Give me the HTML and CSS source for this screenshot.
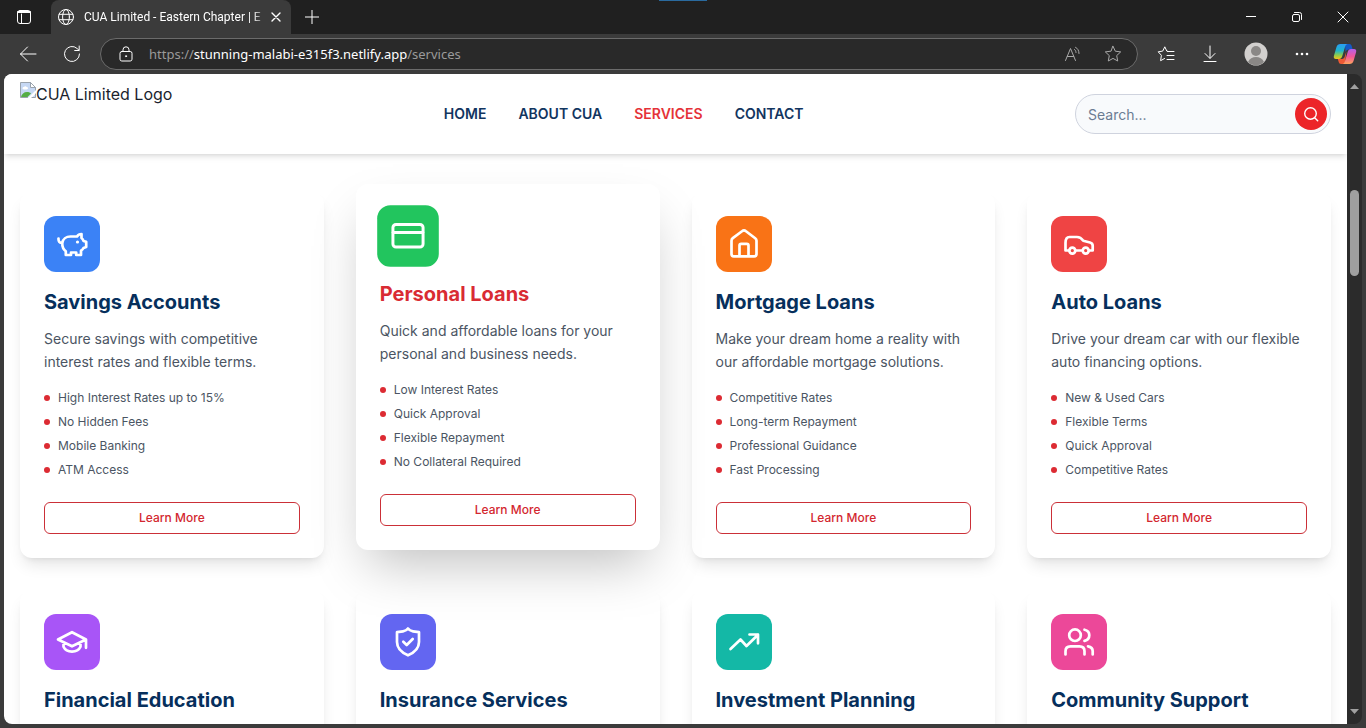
FILE: index.html
```
<!DOCTYPE html>
<html lang="en">
<head>
    <meta charset="UTF-8">
    <meta name="viewport" content="width=device-width, initial-scale=1.0">
    <title>CUA Limited - Eastern Chapter</title>
    <link rel="stylesheet" href="styles.css">
</head>
<body>
    <!-- tab strip -->
    <div class="tabstrip">
        <button class="tab-menu" aria-label="Tab actions">
            <svg width="16" height="16" viewBox="0 0 16 16"><rect x="1.5" y="1.5" width="13" height="13" rx="2.5"/><path d="M2 3.5h12M5.5 5v9" /><path d="M2 3h12" stroke-width="2"/></svg>
        </button>
        <div class="tab">
            <svg width="18" height="18" viewBox="0 0 18 18"><circle cx="9" cy="9" r="7.5"/><ellipse cx="9" cy="9" rx="3.4" ry="7.5"/><path d="M2.2 6.3h13.6M2.2 11.7h13.6"/></svg>
            <span class="tab-title">CUA Limited - Eastern Chapter | E</span>
            <button class="tab-close" aria-label="Close tab">
                <svg width="10" height="10" viewBox="0 0 10 10"><path d="M1 1l8 8M9 1l-8 8"/></svg>
            </button>
        </div>
        <button class="new-tab" aria-label="New tab">
            <svg width="14" height="14" viewBox="0 0 14 14"><path d="M7 0v14M0 7h14"/></svg>
        </button>
        <div class="drag-bar"></div>
        <div class="win-btns">
            <button aria-label="Minimize"><svg width="10" height="10" viewBox="0 0 10 10"><path d="M0 4.5h10"/></svg></button>
            <button aria-label="Restore"><svg width="12" height="12" viewBox="0 0 12 12"><rect x="1.5" y="3.5" width="7" height="7" rx="1.5"/><path d="M3.5 1.5h5a2 2 0 0 1 2 2v5"/></svg></button>
            <button aria-label="Close"><svg width="12" height="12" viewBox="0 0 12 12"><path d="M1 1l10 10M11 1L1 11"/></svg></button>
        </div>
    </div>

    <!-- toolbar -->
    <div class="toolbar">
        <button aria-label="Back"><svg width="18" height="16" viewBox="0 0 18 16"><path d="M17 8H1.5M8.5 1l-7 7 7 7"/></svg></button>
        <button aria-label="Reload"><svg width="18" height="18" viewBox="0 0 18 18"><path d="M16.5 9a7.5 7.5 0 1 1-2.4-5.5L16 5.3M16.2 1v4.5h-4.5"/></svg></button>
        <div class="address">
            <svg class="lock" width="14" height="16" viewBox="0 0 14 16"><rect x="1" y="5.5" width="12" height="9.5" rx="1.8"/><path d="M4 5.5V3.8a3 3 0 0 1 6 0v1.7"/><circle cx="7" cy="10.2" r=".6"/></svg>
            <div class="url">https://<span>stunning-malabi-e315f3.netlify.app</span>/services</div>
            <button class="dim" aria-label="Read aloud"><svg width="18" height="16" viewBox="0 0 18 16"><path d="M1.5 14.5l5-12 5 12M3.3 10.5h6.4M10.5 3.5c1 .7 1.5 1.7 1.5 3M11.5 1.3c2.2 1.1 3.5 3.2 3.5 6.2"/></svg></button>
            <button class="dim" aria-label="Add to favorites"><svg width="18" height="18" viewBox="0 0 18 18"><path d="M9 1.3l2.3 4.9 5.4.7-4 3.7 1 5.4L9 13.4 4.3 16l1-5.4-4-3.7 5.4-.7z"/></svg></button>
        </div>
        <button aria-label="Favorites"><svg width="18" height="18" viewBox="0 0 18 18"><path d="M10.5 6.2L9.8 6.1 7.8 1.8 5.7 6.1l-4.5.7 3.2 3.5-.8 5.4 4-2.2M10.5 6.5H17M10 10.5h7M10 14.5h7"/></svg></button>
        <button aria-label="Downloads"><svg width="14" height="18" viewBox="0 0 14 18"><path d="M7 1v12M2 8.5l5 5 5-5M1 16.5h12"/></svg></button>
        <button class="profile" aria-label="Profile">
            <svg width="24" height="24" viewBox="0 0 24 24"><circle cx="12" cy="12" r="11.5" fill="#d2d0ce"/><circle cx="12" cy="9" r="5" fill="#8a8886"/><path d="M4 20c1.5-3.5 4.5-5 8-5s6.5 1.5 8 5a11.5 11.5 0 0 1-16 0z" fill="#8a8886"/></svg>
        </button>
        <button aria-label="Settings"><svg width="16" height="4" viewBox="0 0 16 4"><g fill="#fff" stroke="none"><circle cx="3" cy="2" r="1.3"/><circle cx="8" cy="2" r="1.3"/><circle cx="13" cy="2" r="1.3"/></g></svg></button>
        <button class="copilot" aria-label="Copilot">
            <svg width="24" height="22" viewBox="0 0 24 22">
                <defs>
                    <linearGradient id="cpA" x1="0" y1="0" x2="0" y2="1"><stop offset="0" stop-color="#2a9df4"/><stop offset=".45" stop-color="#1fb5c9"/><stop offset=".75" stop-color="#8fcc4a"/><stop offset="1" stop-color="#f3c21c"/></linearGradient>
                    <linearGradient id="cpB" x1="0" y1="0" x2="0" y2="1"><stop offset="0" stop-color="#b35fe8"/><stop offset=".5" stop-color="#f0569a"/><stop offset="1" stop-color="#ffa45c"/></linearGradient>
                </defs>
                <path d="M12 1h4.5c1.2 0 1.8.7 2.2 2l1 3.5H16c-2 0-3 1-3.5 2.5z" fill="#1459c7"/>
                <path d="M12 21H8c-1.3 0-2-.8-2.3-2l-.9-3H9c1.5 0 2.3-1 2.8-2.5l1.5-5z" fill="#ee5a35"/>
                <path d="M7.5 1h7c-1.5.3-2 1.5-2.5 3L9.3 13c-.6 2-1.5 3-3.3 3H3c-2 0-2.7-1.3-2-3.5L3.5 4C4 2 5.5 1 7.5 1z" fill="url(#cpA)"/>
                <path d="M16.5 21h-7c1.5-.3 2-1.5 2.5-3l2.7-9c.6-2 1.5-3 3.3-3h3c2 0 2.7 1.3 2 3.5L20.5 18c-.5 2-2 3-4 3z" fill="url(#cpB)"/>
            </svg>
        </button>
    </div>

    <!-- page -->
    <div class="window">
        <div class="page">
            <header class="header">
                <a href="#" class="logo">
                    <svg width="16" height="16" viewBox="0 0 16 16"><path d="M.5.5h10l5 5v10H.5z" fill="#c6d8f4"/><path d="M4 7.5c-1 0-1.5-.5-1.5-1.2S3 5 4 5c.4-1 2.2-1 2.6 0 1 0 1.4.6 1.4 1.3S7.5 7.5 6.5 7.5z" fill="#fff"/><path d="M1 15c.5-3 3-5 6-5 2 0 3 .5 4 1.5L7.5 15z" fill="#55ad45"/><path d="M8 16l8-8v3.5L11.5 16z" fill="#fff"/><path d="M10.5.5v5h5z" fill="#fff"/><path d="M7.5 15.5h-7V.5h10l5 5v2.5M10.5.5v5h5M12 15.5h3.5V12" stroke="#9aa3ad"/></svg><span>CUA Limited Logo</span>
                </a>
                <nav class="nav">
                    <a href="#">HOME</a>
                    <a href="#">ABOUT CUA</a>
                    <a href="#" class="current">SERVICES</a>
                    <a href="#">CONTACT</a>
                </nav>
                <form class="search">
                    <input type="text" placeholder="Search..." aria-label="Search">
                    <button type="button" aria-label="Search">
                        <svg width="16" height="16" viewBox="0 0 16 16"><circle cx="7.5" cy="7.5" r="5.8"/><path d="M11.7 11.7l3 3"/></svg>
                    </button>
                </form>
            </header>

            <main class="services">
                <article class="card">
                    <div class="icon blue"><svg viewBox="0 0 32 32"><path d="M2.5 10.5c-.2 3 1 4.5 3.8 4.5M6.3 15c.5-4 4-6.5 8.2-6.5H21c1-1.7 2.6-2.5 4.5-2.5v4c1 .8 1.7 1.8 2 3l2.7.8V19l-2.7 1c-.6 1.2-1.4 2-2.5 2.7V27h-4.8v-2.5H15V27H9.8v-3.8C7.3 21.3 6 18.5 6.3 15z"/><circle cx="21.5" cy="14" r="1.6" fill="#fff" stroke="none"/></svg></div>
                    <h3>Savings Accounts</h3>
                    <p>Secure savings with competitive interest rates and flexible terms.</p>
                    <ul>
                        <li>High Interest Rates up to 15%</li>
                        <li>No Hidden Fees</li>
                        <li>Mobile Banking</li>
                        <li>ATM Access</li>
                    </ul>
                    <button>Learn More</button>
                </article>
                <article class="card active">
                    <div class="icon green"><svg viewBox="0 0 32 32"><rect x="2.3" y="5.5" width="27.4" height="20.5" rx="2.8"/><path d="M2.5 12.8h27"/></svg></div>
                    <h3>Personal Loans</h3>
                    <p>Quick and affordable loans for your personal and business needs.</p>
                    <ul>
                        <li>Low Interest Rates</li>
                        <li>Quick Approval</li>
                        <li>Flexible Repayment</li>
                        <li>No Collateral Required</li>
                    </ul>
                    <button>Learn More</button>
                </article>
                <article class="card">
                    <div class="icon orange"><svg viewBox="0 0 32 32"><path d="M3.5 12.8c0-1.2.5-2 1.3-2.6L14 3.2c1.2-1 2.8-1 4 0l9.2 7c.8.6 1.3 1.4 1.3 2.6V26c0 1.5-1 2.3-2.3 2.3H5.800C4.500 28.300 3.500 27.500 3.500 26zM11.500 28V17.500c0-1 .7-1.700 1.700-1.700h5.600c1 0 1.700.7 1.700 1.700V28"/></svg></div>
                    <h3>Mortgage Loans</h3>
                    <p>Make your dream home a reality with our affordable mortgage solutions.</p>
                    <ul>
                        <li>Competitive Rates</li>
                        <li>Long-term Repayment</li>
                        <li>Professional Guidance</li>
                        <li>Fast Processing</li>
                    </ul>
                    <button>Learn More</button>
                </article>
                <article class="card">
                    <div class="icon red"><svg viewBox="0 0 32 32"><path d="M6 22.5H2.5V15c0-4 1.5-6 4-6H14c2.8 0 4.2.8 6.3 3.8l6.7 1.7c2 .5 2.7 1.5 2.7 3.2v4.800H26M12.600 22.500h6.800"/><circle cx="9.300" cy="22.600" r="3"/><circle cx="22.700" cy="22.600" r="3"/></svg></div>
                    <h3>Auto Loans</h3>
                    <p>Drive your dream car with our flexible auto financing options.</p>
                    <ul>
                        <li>New &amp; Used Cars</li>
                        <li>Flexible Terms</li>
                        <li>Quick Approval</li>
                        <li>Competitive Rates</li>
                    </ul>
                    <button>Learn More</button>
                </article>
                <article class="card">
                    <div class="icon purple"><svg viewBox="0 0 32 32"><path d="M2 13.5L16 6.2l14 7.3-14 6.8zM7.5 16.5v4.2c1.5 3.2 4.8 4.9 8.5 4.9s7-1.7 8.5-4.900v-4.200M30 13.500v8.300"/></svg></div>
                    <h3>Financial Education</h3>
                </article>
                <article class="card">
                    <div class="icon indigo"><svg viewBox="0 0 32 32"><path d="M16 2.5c1.2 1.7 3 2.5 5 2.8l6 .9V16c0 6.5-4.5 10.5-11 13.3C9.5 26.5 5 22.5 5 16V6.2l6-.9c2-.3 3.8-1.1 5-2.8zM11.3 15.8l3.4 3.2 6-6"/></svg></div>
                    <h3>Insurance Services</h3>
                </article>
                <article class="card">
                    <div class="icon teal"><svg viewBox="0 0 32 32"><path d="M2.5 23l10-9.5 6 6.5L30 8.8M21.5 8.5H30v8.8"/></svg></div>
                    <h3>Investment Planning</h3>
                </article>
                <article class="card">
                    <div class="icon pink"><svg viewBox="0 0 32 32"><circle cx="12" cy="9.2" r="5.8"/><path d="M21.5 3.7c2.9.6 4.8 2.8 4.8 5.5s-1.9 5-4.8 5.7M2.5 28.5v-3.3c0-3 2-4.9 5-4.9h9c3 0 5 1.9 5 4.9v3.3M25 20.3c3 .5 4.7 2.3 4.7 4.9v3.3"/></svg></div>
                    <h3>Community Support</h3>
                </article>
            </main>
        </div>
        <div class="scrollbar">
            <svg width="9" height="5" viewBox="0 0 9 5"><path d="M4.5 0L9 5H0z"/></svg>
            <div class="thumb"></div>
            <svg width="9" height="5" viewBox="0 0 9 5"><path d="M4.5 5L9 0H0z"/></svg>
        </div>
    </div>
</body>
</html>
```
FILE: styles.css
```
*{
    margin: 0;
    padding: 0;
    box-sizing: border-box;
}
body{
    display: flex;
    flex-direction: column;
    height: 100vh;
    overflow: hidden;
    background-color: #3b3b3b;
    font-family: "Inter", sans-serif;
}
ul{
    list-style: none;
}
a{
    text-decoration: none;
}
button{
    font-family: inherit;
    background: none;
    border: none;
    cursor: pointer;
}
svg{
    display: block;
    flex-shrink: 0;
    fill: none;
    stroke: currentColor;
    stroke-linecap: round;
    stroke-linejoin: round;
}

/* tab strip */
.tabstrip{
    display: flex;
    height: 34px;
    color: #fff;
    background: linear-gradient(#2a6a9e, #2a6a9e) 659px 0 / 48px 1px no-repeat #202020;
}
.tabstrip button{
    display: flex;
    align-items: center;
    justify-content: center;
    color: #fff;
}
.tab-menu{
    width: 48px;
}
.tab{
    display: flex;
    align-items: center;
    width: 240px;
    margin-left: 3px;
    padding-left: 6px;
    gap: 9px;
    background-color: #3b3b3b;
    border-radius: 8px 8px 0 0;
}
.tab-title{
    flex: 1;
    overflow: hidden;
    white-space: nowrap;
    font: 12px "Roboto", sans-serif;
    -webkit-mask-image: linear-gradient(to right, #000 92%, transparent);
    mask-image: linear-gradient(to right, #000 92%, transparent);
}
.tab-close{
    width: 16px;
    height: 24px;
    margin-right: 7px;
    margin-left: -8px;
}
.tab-close svg{
    stroke-width: 1.4;
}
.new-tab{
    width: 42px;
}
.drag-bar{
    flex: 1;
}
.win-btns{
    display: flex;
}
.win-btns button{
    width: 46px;
}

/* toolbar */
.toolbar{
    display: flex;
    align-items: center;
    height: 40px;
    padding-left: 6px;
    color: #fff;
}
.toolbar button{
    display: flex;
    align-items: center;
    justify-content: center;
    width: 44px;
    height: 32px;
    color: #fff;
}
.toolbar .profile{
    width: 48px;
}
.toolbar .copilot{
    width: 42px;
}
.profile svg, .copilot svg{
    stroke: none;
}
.address{
    display: flex;
    align-items: center;
    flex: 1;
    height: 32px;
    margin: 0 6px;
    padding-left: 18px;
    background-color: #292929;
    border: 1px solid #6b6b6b;
    border-radius: 16px;
}
.address .url{
    flex: 1;
    margin-left: 16px;
    font: 13px "Noto Sans", sans-serif;
    color: #9a9a9a;
}
.address .url span{
    color: #fff;
}
.toolbar .dim{
    width: 40px;
    color: #a8a8a8;
}
.toolbar .dim:last-child{
    margin-right: 4px;
}

/* window */
.window{
    display: flex;
    flex: 1;
    min-height: 0;
    margin: 0 4px 4px;
    background-color: #2b2b2b;
    border-radius: 8px;
    overflow: hidden;
}
.page{
    flex: 1;
    overflow: hidden;
    background-color: #fff;
}
.scrollbar{
    display: flex;
    flex-direction: column;
    align-items: center;
    width: 15px;
    padding: 10px 0;
}
.scrollbar svg{
    fill: #a0a0a0;
    stroke: none;
}
.scrollbar .thumb{
    width: 9px;
    height: 86px;
    margin: 101px 0 auto;
    background-color: #9f9f9f;
    border-radius: 5px;
}

/* header */
.header{
    position: relative;
    z-index: 1;
    display: flex;
    align-items: center;
    justify-content: space-between;
    height: 80px;
    padding: 0 16px;
    background-color: #fff;
    box-shadow: 0 4px 6px -1px rgba(0,0,0,.1), 0 2px 4px -2px rgba(0,0,0,.1);
}
.logo{
    display: flex;
    height: 64px;
    font-size: 16px;
    line-height: 24px;
    color: #1a1f2e;
}
.logo svg{
    stroke: none;
}
.nav{
    display: flex;
    gap: 32px;
}
.nav a{
    font-size: 14px;
    font-weight: 600;
    line-height: 20px;
    color: #12355f;
}
.nav a.current{
    color: #e53238;
}
.search{
    display: flex;
    align-items: center;
    width: 256px;
    height: 40px;
    padding: 0 3px 0 12px;
    background-color: #f8fafc;
    border: 1px solid #cfd3de;
    border-radius: 20px;
}
.search input{
    flex: 1;
    min-width: 0;
    font: 14px "Inter", sans-serif;
    background: none;
    border: none;
    outline: none;
}
.search input::placeholder{
    color: #6b7c93;
}
.search button{
    display: flex;
    align-items: center;
    justify-content: center;
    width: 32px;
    height: 32px;
    color: #fff;
    background-color: #ec2529;
    border-radius: 50%;
}
.search svg{
    stroke-width: 1.4;
}

/* cards */
.services{
    display: grid;
    grid-template-columns: repeat(4, 1fr);
    gap: 32px;
    padding: 38px 16px;
}
.card{
    padding: 24px;
    background-color: #fff;
    border-radius: 12px;
    box-shadow: 0 10px 15px -3px rgba(0,0,0,.1), 0 4px 6px -4px rgba(0,0,0,.1);
}
.icon{
    display: flex;
    align-items: center;
    justify-content: center;
    width: 56px;
    height: 56px;
    margin-bottom: 16px;
    color: #fff;
    border-radius: 12px;
}
.icon svg{
    width: 32px;
    height: 32px;
    stroke-width: 2.7;
}
.blue{ background-color: #3b82f6; }
.green{ background-color: #22c55e; }
.orange{ background-color: #f97316; }
.red{ background-color: #ef4444; }
.purple{ background-color: #a855f7; }
.indigo{ background-color: #6366f1; }
.teal{ background-color: #14b8a6; }
.pink{ background-color: #ec4899; }
.card h3{
    margin-bottom: 11px;
    font-size: 20px;
    font-weight: 700;
    line-height: 28px;
    color: #062f5c;
}
.card p{
    margin-bottom: 17px;
    font-size: 14px;
    line-height: 23px;
    color: #4b5563;
}
.card ul{
    display: flex;
    flex-direction: column;
    gap: 8px;
    margin-bottom: 24px;
}
.card li{
    display: flex;
    align-items: center;
    gap: 8px;
    font-size: 12px;
    line-height: 16px;
    color: #4b5563;
}
.card li::before{
    content: "";
    width: 6px;
    height: 6px;
    background-color: #dc2b33;
    border-radius: 50%;
}
.card button{
    width: 100%;
    height: 32px;
    font-size: 12px;
    font-weight: 500;
    line-height: 16px;
    color: #d3272f;
    border: 1px solid #cb3038;
    border-radius: 6px;
}
/* hovered card */
.card.active{
    transform: translateY(-8px);
    box-shadow: 0 25px 50px -12px rgba(0,0,0,.25);
}
.card.active .icon{
    transform: scale(1.1);
}
.card.active h3{
    color: #d92b33;
}
```
